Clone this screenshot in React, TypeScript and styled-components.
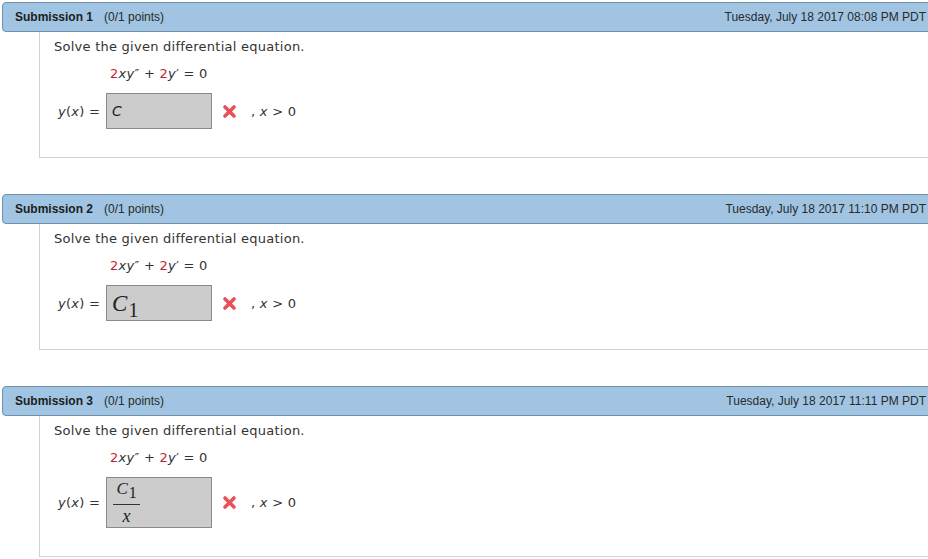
import React from "react";
import styled, { createGlobalStyle } from "styled-components";

const Global = createGlobalStyle`
  html, body { margin: 0; padding: 0; background: #ffffff; }
  body { overflow: hidden; width: 928px; }
`;

const Page = styled.div`
  width: 928px;
  padding-top: 2px;
  overflow: hidden;
`;

const Section = styled.section`
  margin-bottom: 36px;
  &:last-child { margin-bottom: 0; }
`;

const Header = styled.div`
  box-sizing: border-box;
  height: 30px;
  margin-left: 2px;
  margin-right: -10px;
  padding: 0 11px 0 12px;
  display: flex;
  align-items: center;
  justify-content: space-between;
  background: #a0c4e2;
  border: 1px solid #6f8fab;
  border-radius: 4px 0 0 4px;
  font-family: "Liberation Sans", Arial, sans-serif;
  font-size: 12px;
  color: #222;
`;

const HeaderLeft = styled.div`
  display: flex;
  align-items: baseline;
  gap: 11px;
`;

const Title = styled.span`
  font-weight: bold;
  color: #1d1d1d;
`;

const Points = styled.span`
  color: #2a2a2a;
`;

const DateText = styled.span`
  color: #2a2a2a;
`;

const Body = styled.div`
  margin-left: 39px;
  margin-right: -10px;
  border: 1px solid #d2d2d2;
  border-top: none;
  padding: 7px 0 28px 14px;
  font-family: "DejaVu Sans", Verdana, sans-serif;
  font-size: 13px;
  letter-spacing: 0.25px;
  color: #333;
`;

const Prompt = styled.div`
  line-height: 16px;
  height: 16px;
`;

const Equation = styled.div`
  margin-top: 11px;
  margin-left: 56px;
  line-height: 16px;
  height: 16px;
`;

const Red = styled.span`
  color: #c0272d;
`;

const Var = styled.span`
  font-style: italic;
`;

const AnswerRow = styled.div`
  margin-top: 11px;
  margin-left: 4px;
  display: flex;
  align-items: center;
`;

const Label = styled.span`
  white-space: pre;
`;

const AnswerBox = styled.div<{ $tall?: boolean }>`
  box-sizing: border-box;
  width: 106px;
  height: ${(p) => (p.$tall ? "51px" : "36px")};
  margin-left: 6px;
  background: #cccccc;
  border: 1px solid #8a8a8a;
  display: flex;
  align-items: center;
  padding-left: 5px;
  letter-spacing: 0;
`;

const SansC = styled.span`
  font-family: "DejaVu Sans", Verdana, sans-serif;
  font-style: italic;
  font-size: 14px;
  color: #222;
`;

const SerifMath = styled.span<{ $size: number }>`
  font-family: "Liberation Serif", "Times New Roman", serif;
  font-size: ${(p) => p.$size}px;
  color: #222;
  line-height: 1;
  display: inline-flex;
  align-items: flex-start;
`;

const SerifItalic = styled.span`
  font-style: italic;
`;

const Sub = styled.span<{ $size: number; $drop: number }>`
  font-size: ${(p) => p.$size}px;
  position: relative;
  top: ${(p) => p.$drop}px;
  margin-left: 1px;
`;

const Fraction = styled.div`
  display: flex;
  flex-direction: column;
  align-items: center;
  margin-left: 1px;
  width: 27px;
`;

const Numerator = styled.div`
  height: 22px;
  display: flex;
  justify-content: center;
  padding-bottom: 2px;
`;

const FracLine = styled.div`
  width: 27px;
  height: 1px;
  background: #333;
`;

const Denominator = styled.div`
  padding-top: 2px;
  font-family: "Liberation Serif", "Times New Roman", serif;
  font-style: italic;
  font-size: 18px;
  line-height: 18px;
  color: #222;
`;

const Mark = styled.svg`
  margin-left: 10px;
  flex: none;
`;

const Condition = styled.span`
  margin-left: 14px;
  white-space: pre;
`;

const WrongMark = () => (
  <Mark width="15" height="15" viewBox="0 0 15 15">
    <path
      d="M3 3 L12 12 M12 3 L3 12"
      stroke="#e9505a"
      strokeWidth="3.6"
      strokeLinecap="round"
    />
  </Mark>
);

type Submission = {
  n: number;
  date: string;
  answer: React.ReactNode;
  tall?: boolean;
};

const submissions: Submission[] = [
  {
    n: 1,
    date: "Tuesday, July 18 2017 08:08 PM PDT",
    answer: <SansC>C</SansC>,
  },
  {
    n: 2,
    date: "Tuesday, July 18 2017 11:10 PM PDT",
    answer: (
      <SerifMath $size={23}>
        <SerifItalic>C</SerifItalic>
        <Sub $size={20} $drop={8}>1</Sub>
      </SerifMath>
    ),
  },
  {
    n: 3,
    date: "Tuesday, July 18 2017 11:11 PM PDT",
    tall: true,
    answer: (
      <Fraction>
        <Numerator>
          <SerifMath $size={17}>
            <SerifItalic>C</SerifItalic>
            <Sub $size={16} $drop={5}>1</Sub>
          </SerifMath>
        </Numerator>
        <FracLine />
        <Denominator>x</Denominator>
      </Fraction>
    ),
  },
];

export default function App() {
  return (
    <>
      <Global />
      <Page>
        {submissions.map((s) => (
          <Section key={s.n}>
            <Header>
              <HeaderLeft>
                <Title>Submission {s.n}</Title>
                <Points>(0/1 points)</Points>
              </HeaderLeft>
              <DateText>{s.date}</DateText>
            </Header>
            <Body>
              <Prompt>Solve the given differential equation.</Prompt>
              <Equation>
                <Red>2</Red>
                <Var>xy</Var>″ + <Red>2</Red>
                <Var>y</Var>′ = 0
              </Equation>
              <AnswerRow>
                <Label>
                  <Var>y</Var>(<Var>x</Var>) =
                </Label>
                <AnswerBox $tall={s.tall}>{s.answer}</AnswerBox>
                <WrongMark />
                <Condition>
                  , <Var>x</Var> &gt; 0
                </Condition>
              </AnswerRow>
            </Body>
          </Section>
        ))}
      </Page>
    </>
  );
}
